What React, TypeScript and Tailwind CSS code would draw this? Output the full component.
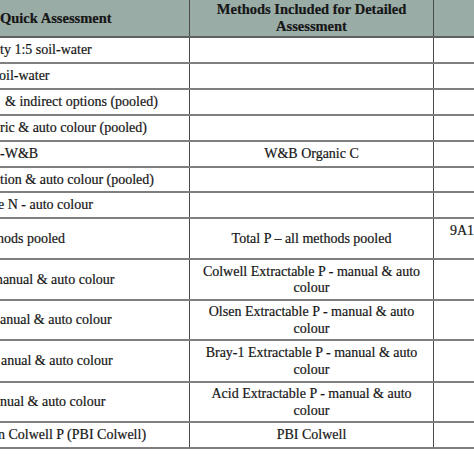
import React from "react";

type Row = {
  h: string;
  c1: string;
  c1cls?: string;
  c2?: string;
  c3?: string;
};

const rows: Row[] = [
  { h: "h-[26px]", c1: "ty 1:5 soil-water" },
  { h: "h-[26px]", c1: "oil-water", c1cls: "-ml-[1px]" },
  { h: "h-[26px]", c1: "& indirect options (pooled)", c1cls: "ml-[5px]" },
  { h: "h-[26px]", c1: "ric & auto colour (pooled)" },
  { h: "h-[26px]", c1: "-W&B", c2: "W&B Organic C" },
  { h: "h-[25px]", c1: "tion & auto colour (pooled)" },
  { h: "h-[26px]", c1: "e N - auto colour", c1cls: "-ml-[2px]" },
  { h: "h-[41px]", c1: "hods pooled", c1cls: "-ml-[3px]", c2: "Total P – all methods pooled", c3: "9A1" },
  { h: "h-[41px]", c1: "manual & auto colour", c1cls: "-ml-[8px]", c2: "Colwell Extractable P - manual & auto colour" },
  { h: "h-[40px]", c1: "anual & auto colour", c2: "Olsen Extractable P - manual & auto colour" },
  { h: "h-[42px]", c1: "anual & auto colour", c1cls: "ml-[1px]", c2: "Bray-1 Extractable P - manual & auto colour" },
  { h: "h-[40px]", c1: "nual & auto colour", c2: "Acid Extractable P - manual & auto colour" },
  { h: "h-[26px]", c1: "n Colwell P (PBI Colwell)", c1cls: "-ml-[2px]", c2: "PBI Colwell" },
];

export default function App() {
  return (
    <div
      className="w-[474px] h-[474px] overflow-hidden bg-white text-[#161616] [-webkit-text-stroke:0.2px_#161616]"
      style={{ fontFamily: '"Liberation Serif", "Times New Roman", serif' }}
    >
      <div className="w-[560px]">
        <div className="flex h-[38px] bg-[#9aaca6] border-b-2 border-[#5f5f5f] text-[14.5px] font-bold leading-[17px]">
          <div className="w-[190px] shrink-0 flex items-center border-r border-[#4a4a4a] whitespace-nowrap overflow-hidden">
            <span>Quick Assessment</span>
          </div>
          <div className="w-[244px] shrink-0 flex items-center justify-center text-center border-r border-[#4a4a4a] px-2">
            <span>Methods Included for Detailed Assessment</span>
          </div>
          <div className="flex-1" />
        </div>
        {rows.map((r, i) => (
          <div
            key={i}
            className={`flex ${r.h} border-b-2 border-[#7f7f7f] text-[14px] leading-[16.5px]`}
          >
            <div className="w-[190px] shrink-0 flex items-center pt-[1px] border-r border-[#4a4a4a] whitespace-nowrap overflow-hidden">
              <span className={r.c1cls}>{r.c1}</span>
            </div>
            <div className="w-[244px] shrink-0 flex items-center justify-center text-center pt-[1px] border-r border-[#4a4a4a] px-[10px]">
              {r.c2 ? <span>{r.c2}</span> : null}
            </div>
            <div className="flex-1 flex items-start pt-[4px] pl-[16px] whitespace-nowrap">
              {r.c3 ? <span>{r.c3}</span> : null}
            </div>
          </div>
        ))}
      </div>
    </div>
  );
}
